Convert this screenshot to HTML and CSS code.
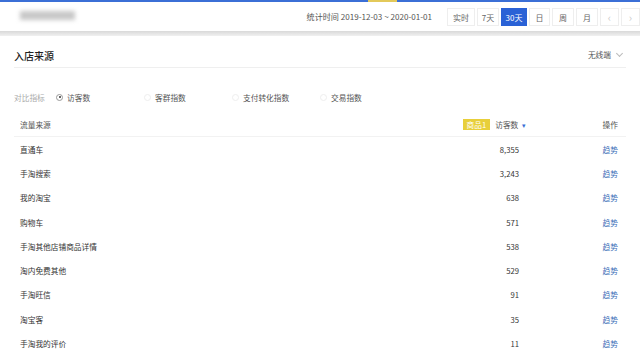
FILE: index.html
```html
<!DOCTYPE html>
<html>
<head>
    <title>入店来源</title>
    <link rel="stylesheet" href="styles.css">
</head>
<body>
    <div class="topline">
        <span class="topline-mark"></span>
    </div>

    <div class="header">
        <div class="logo"></div>
        <div class="period">统计时间 2019-12-03 ~ 2020-01-01</div>
        <div class="btn-group">
            <span class="btn w28">实时</span>
            <span class="btn w22">7天</span>
            <span class="btn w26 active">30天</span>
            <span class="btn w21">日</span>
            <span class="btn w22">周</span>
            <span class="btn w22">月</span>
            <span class="btn arrow">&lsaquo;</span>
            <span class="btn arrow">&rsaquo;</span>
        </div>
    </div>

    <div class="shade"></div>

    <div class="card">
        <div class="card-head">
            <h2>入店来源</h2>
            <div class="device">无线端 <span class="chevron"></span></div>
        </div>

        <div class="compare">
            <span class="compare-label">对比指标</span>
            <label class="radio checked"><span class="dot"></span>访客数</label>
            <label class="radio"><span class="dot"></span>客群指数</label>
            <label class="radio"><span class="dot"></span>支付转化指数</label>
            <label class="radio"><span class="dot"></span>交易指数</label>
        </div>

        <table class="source-table">
            <colgroup>
                <col>
                <col class="c-num">
                <col class="c-op">
            </colgroup>
            <thead>
                <tr>
                    <th class="col-name">流量来源</th>
                    <th class="col-num"><span class="badge">商品1</span>访客数 <span class="sort">&#9662;</span></th>
                    <th class="col-op">操作</th>
                </tr>
            </thead>
            <tbody>
                <tr><td>直通车</td><td class="num">8,355</td><td class="op">趋势</td></tr>
                <tr><td>手淘搜索</td><td class="num">3,243</td><td class="op">趋势</td></tr>
                <tr><td>我的淘宝</td><td class="num">638</td><td class="op">趋势</td></tr>
                <tr><td>购物车</td><td class="num">571</td><td class="op">趋势</td></tr>
                <tr><td>手淘其他店铺商品详情</td><td class="num">538</td><td class="op">趋势</td></tr>
                <tr><td>淘内免费其他</td><td class="num">529</td><td class="op">趋势</td></tr>
                <tr><td>手淘旺信</td><td class="num">91</td><td class="op">趋势</td></tr>
                <tr><td>淘宝客</td><td class="num">35</td><td class="op">趋势</td></tr>
                <tr><td>手淘我的评价</td><td class="num">11</td><td class="op">趋势</td></tr>
            </tbody>
        </table>
    </div>
</body>
</html>
```

FILE: styles.css
```css
body {
    font-family: "Noto Sans CJK SC", "Liberation Sans", sans-serif;
    background-color: #fff;
    color: #333;
    margin: 0;
    font-size: 7.7px;
    overflow: hidden;
}

.topline {
    height: 2px;
    background-color: #3b6fd6;
    display: flex;
}

.topline-mark {
    width: 29px;
    margin-left: 368px;
    background-color: #e3c95a;
}

.header {
    height: 29px;
    display: flex;
    align-items: center;
    padding-left: 20px;
}

.logo {
    width: 55px;
    height: 9px;
    background-color: #c8c8c8;
    filter: blur(2px);
    margin-top: -2px;
}

.period {
    margin-left: auto;
    margin-right: 15px;
    font-size: 8.1px;
    color: #555;
}

.btn-group {
    display: flex;
    gap: 2px;
}

.btn {
    height: 18px;
    line-height: 17px;
    border: 1px solid #eee;
    box-sizing: border-box;
    color: #666;
    font-size: 8px;
    text-align: center;
}

.w21 { width: 21px; }
.w22 { width: 22px; }
.w26 { width: 26px; }
.w28 { width: 28px; }

.btn.active {
    background-color: #2a62d6;
    border-color: #2a62d6;
    color: #fff;
}

.btn.arrow {
    width: 19px;
    color: #ccc;
    font-size: 11px;
}

.shade {
    height: 5px;
    background: linear-gradient(#d9d9d9, #f0f0f0);
}

.card {
    padding: 0 14px;
}

.card-head {
    height: 32px;
    box-sizing: border-box;
    padding-bottom: 4px;
    display: flex;
    align-items: flex-end;
    border-bottom: 1px solid #efefef;
}

.card-head h2 {
    margin: 0;
    font-size: 10px;
    font-weight: 500;
    color: #222;
}

.device {
    margin-left: auto;
    margin-right: 4px;
    margin-bottom: 3px;
    color: #555;
    display: flex;
    align-items: center;
    gap: 6px;
}

.chevron {
    width: 4px;
    height: 4px;
    border-right: 1px solid #bbb;
    border-bottom: 1px solid #bbb;
    transform: rotate(45deg);
    margin-top: -3px;
}

.compare {
    display: flex;
    align-items: center;
    height: 12px;
    padding: 23px 0 9px;
}

.compare-label {
    color: #aaa;
    width: 42px;
}

.radio {
    display: flex;
    align-items: center;
    gap: 4px;
    width: 88px;
    color: #555;
}

.radio .dot {
    width: 7px;
    height: 7px;
    border: 1px solid #eee;
    border-radius: 50%;
    box-sizing: border-box;
    position: relative;
}

.radio.checked .dot {
    border-color: #999;
}

.radio.checked .dot::after {
    content: "";
    position: absolute;
    left: 1.5px;
    top: 1.5px;
    width: 2px;
    height: 2px;
    border-radius: 50%;
    background-color: #333;
}

.source-table {
    width: 100%;
    border-collapse: collapse;
    table-layout: fixed;
}

.c-num { width: 120px; }
.c-op { width: 100px; }

.source-table th,
.source-table td {
    height: 24.3px;
    padding: 0;
    font-weight: normal;
    text-align: left;
}

.source-table th {
    color: #555;
    height: 24px;
    border-bottom: 1px solid #f2f2f2;
}

.source-table th.col-name,
.source-table td:first-child {
    padding-left: 6px;
}

.source-table .col-num {
    text-align: right;
    padding-right: 0;
}

.source-table .num {
    text-align: right;
    padding-right: 7px;
}

.col-num .sort {
    color: #3b6fd6;
    font-size: 7px;
    margin-left: 2px;
}

.badge {
    display: inline-block;
    background-color: #e8cf3a;
    color: #fff;
    padding: 0 4px;
    height: 11px;
    line-height: 11px;
    margin-right: 5px;
}

.source-table .col-op,
.source-table .op {
    text-align: right;
    padding-right: 8px;
}

.op {
    color: #3d6fb8;
}
```
